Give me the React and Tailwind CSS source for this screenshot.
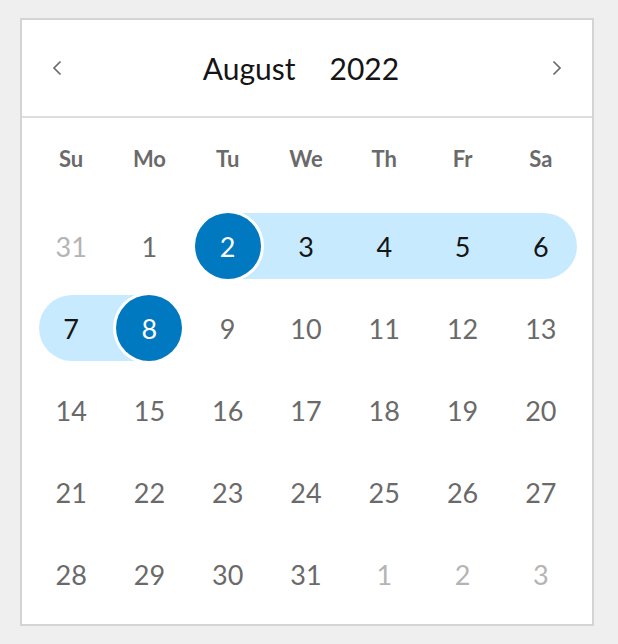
import React from 'react';

const weekdays = ['Su', 'Mo', 'Tu', 'We', 'Th', 'Fr', 'Sa'];

// August 2022, with the spill-over days from July and September
const buildWeeks = () => {
  const days = [{ n: 31, outside: true }];
  for (let i = 1; i <= 31; i++) days.push({ n: i, outside: false });
  for (let i = 1; i <= 3; i++) days.push({ n: i, outside: true });
  const weeks = [];
  for (let i = 0; i < days.length; i += 7) weeks.push(days.slice(i, i + 7));
  return weeks;
};

const rangeStart = 2;
const rangeEnd = 8;

function Chevron({ dir }) {
  return (
    <svg width="10" height="16" viewBox="0 0 10 16" fill="none">
      <polyline
        points={dir === 'left' ? '8.5,1.5 2,8 8.5,14.5' : '1.5,1.5 8,8 1.5,14.5'}
        stroke="#6b6b6b"
        strokeWidth="1.7"
      />
    </svg>
  );
}

function DayCell({ day, col }) {
  const inMonth = !day.outside;
  const isStart = inMonth && day.n === rangeStart;
  const isEnd = inMonth && day.n === rangeEnd;
  const inRange = inMonth && day.n > rangeStart && day.n < rangeEnd;
  const selected = isStart || isEnd;

  let band = null;
  if (isStart) band = 'left-1/2 right-0';
  if (isEnd) band = 'left-0 right-1/2';
  if (inRange) {
    if (col === 0) band = 'left-[7px] right-0 rounded-l-full';
    else if (col === 6) band = 'left-0 right-[3px] rounded-r-full';
    else band = 'left-0 right-0';
  }

  const color = selected
    ? 'text-white'
    : inRange
    ? 'text-[#151515]'
    : day.outside
    ? 'text-[#b4b4b4]'
    : 'text-[#6a6a6a]';

  return (
    <div className="relative h-[82px] flex items-center justify-center">
      {band && <div className={`absolute top-[8px] bottom-[8px] bg-[#c7eaff] ${band}`} />}
      {selected && (
        <div className="absolute w-[66px] h-[66px] rounded-full bg-[#0079c1] ring-[3px] ring-white" />
      )}
      <span className={`relative text-[27px] leading-none ${color}`}>{day.n}</span>
    </div>
  );
}

export default function App() {
  const weeks = buildWeeks();

  return (
    <div className="min-h-[644px] bg-[#efefef] pt-[18px] pl-[20px]" style={{ fontFamily: 'Lato, "Noto Sans", sans-serif' }}>
      <div className="w-[574px] bg-white border-2 border-[#d4d4d4]">
        <div className="h-[98px] flex items-center justify-between px-[30px] border-b-2 border-[#dedede]">
          <button className="w-[10px] h-[16px] flex">
            <Chevron dir="left" />
          </button>
          <div className="mr-[12px] flex items-center gap-[34px] text-[30px] text-[#151515]">
            <span>August</span>
            <span>2022</span>
          </div>
          <button className="w-[10px] h-[16px] flex">
            <Chevron dir="right" />
          </button>
        </div>

        <div className="pl-[10px] pr-[12px] pb-[9px]">
          <div className="grid grid-cols-7 h-[80px] items-center">
            {weekdays.map((w) => (
              <div key={w} className="text-center text-[22px] font-bold text-[#6a6a6a]">
                {w}
              </div>
            ))}
          </div>
          <div className="pt-[7px]">
            {weeks.map((week, wi) => (
              <div key={wi} className="grid grid-cols-7">
                {week.map((day, di) => (
                  <DayCell key={di} day={day} col={di} />
                ))}
              </div>
            ))}
          </div>
        </div>
      </div>
    </div>
  );
}
